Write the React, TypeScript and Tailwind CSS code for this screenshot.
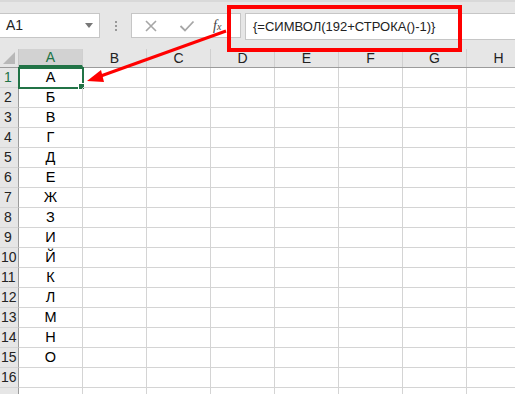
import React from 'react';

const cols = ['A', 'B', 'C', 'D', 'E', 'F', 'G', 'H'];
const letters = ['А', 'Б', 'В', 'Г', 'Д', 'Е', 'Ж', 'З', 'И', 'Й', 'К', 'Л', 'М', 'Н', 'О'];
const rows = Array.from({ length: 17 }, (_, i) => i + 1);

const font = { fontFamily: '"Liberation Sans", Arial, sans-serif' };

const Toolbar = () => (
    <div className="h-[49px] bg-[#e6e6e6] border-t-2 border-[#d9d9d9] flex items-start pt-[11px]">
        <div className="w-[100px] h-[25px] bg-white border border-l-0 border-[#c6c6c6] flex items-center justify-between pl-[6px] pr-[6px]">
            <span className="text-[14px] text-[#222]">A1</span>
            <span className="w-0 h-0 border-l-[4px] border-r-[4px] border-t-[5px] border-l-transparent border-r-transparent border-t-[#777]" />
        </div>
        <div className="w-[31px] h-[25px] flex flex-col items-center justify-center gap-[2px]">
            <span className="w-[2px] h-[2px] bg-[#999]" />
            <span className="w-[2px] h-[2px] bg-[#999]" />
            <span className="w-[2px] h-[2px] bg-[#999]" />
        </div>
        <div className="w-[110px] h-[25px] bg-white border border-[#c6c6c6] flex items-center">
            <svg width="14" height="14" viewBox="0 0 14 14" className="ml-[12px]">
                <path d="M2 2 L12 12 M12 2 L2 12" stroke="#a6a6a6" strokeWidth="1.6" />
            </svg>
            <svg width="16" height="14" viewBox="0 0 16 14" className="ml-[21px]">
                <path d="M1.5 7 L6 11.5 L14.5 2.5" stroke="#a6a6a6" strokeWidth="1.8" fill="none" />
            </svg>
            <span className="ml-[18px] text-[14px] italic text-[#444]" style={{ fontFamily: '"Liberation Serif", serif' }}>
                f<span className="text-[10px]">x</span>
            </span>
        </div>
        <div className="ml-[4px] flex-1 h-[27px] bg-white border border-r-0 border-[#c6c6c6] flex items-center pl-[7px]">
            <span className="text-[13px] text-[#222]">{'{=СИМВОЛ(192+СТРОКА()-1)}'}</span>
        </div>
    </div>
);

const Grid = () => (
    <div className="flex flex-col">
        <div className="flex h-[19px] bg-[#e6e6e6] border-b border-[#9b9b9b]">
            <div className="w-[19px] shrink-0 border-r border-[#c6c6c6] flex items-end justify-end pr-[3px] pb-[3px]">
                <svg width="12" height="12" viewBox="0 0 12 12">
                    <path d="M12 0 L12 12 L0 12 Z" fill="#b8b8b8" />
                </svg>
            </div>
            {cols.map((c) => (
                <div
                    key={c}
                    className={
                        'w-[64px] shrink-0 border-r border-[#cfcfcf] flex items-center justify-center text-[14px] ' +
                        (c === 'A' ? 'bg-[#d2d2d2] text-[#217346] border-b-2 border-b-[#217346]' : 'text-[#222]')
                    }
                >
                    {c}
                </div>
            ))}
        </div>
        {rows.map((r) => (
            <div key={r} className="flex h-[20px]">
                <div
                    className={
                        'w-[19px] shrink-0 bg-[#e6e6e6] border-r border-[#9b9b9b] border-b border-b-[#d4d4d4] flex items-center pl-[1px] text-[14px] ' +
                        (r === 1 ? 'bg-[#d2d2d2] text-[#217346]' : 'text-[#222]')
                    }
                >
                    {r < 17 && <span className={r < 10 ? 'pl-[3px]' : ''}>{r}</span>}
                </div>
                {cols.map((c) => (
                    <div key={c} className="relative w-[64px] shrink-0 border-r border-b border-[#d4d4d4] flex items-center justify-center text-[14.5px] text-black">
                        {c === 'A' && letters[r - 1]}
                        {c === 'A' && r === 1 && (
                            <>
                                <div className="absolute -left-[1px] -top-[1px] w-[66px] h-[22px] border-2 border-[#217346]" />
                                <div className="absolute -right-[3px] -bottom-[3px] w-[7px] h-[7px] bg-[#217346] border border-white" />
                            </>
                        )}
                    </div>
                ))}
            </div>
        ))}
    </div>
);

export default function App() {
    return (
        <div className="relative w-[515px] h-[394px] overflow-hidden bg-white" style={font}>
            <Toolbar />
            <Grid />
            <div className="absolute left-[227px] top-[5px] w-[235px] h-[47px] border-4 border-[#ff0000]" />
            <svg className="absolute left-0 top-0" width="515" height="394" viewBox="0 0 515 394">
                <line x1="226" y1="31" x2="98" y2="77" stroke="#ff0000" strokeWidth="3" />
                <path d="M87 81 L101 70 L104 82 Z" fill="#ff0000" />
            </svg>
        </div>
    );
}
